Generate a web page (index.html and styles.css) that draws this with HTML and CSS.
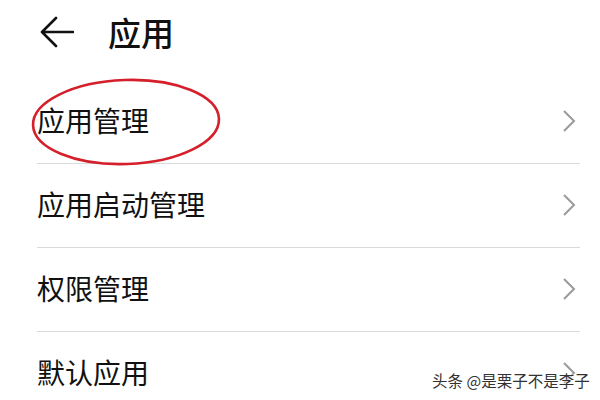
FILE: index.html
```html
<!DOCTYPE html>
<html lang="zh-CN">
<head>
    <meta charset="UTF-8">
    <title>应用</title>
    <link rel="stylesheet" href="styles.css">
</head>
<body>
    <div class="page">
        <header class="top-bar">
            <svg class="back" width="34" height="32" viewBox="0 0 34 32">
                <path d="M33 16 H3 M16 2 L2 16 L16 30" fill="none" stroke="#111" stroke-width="2.6" stroke-linecap="round" stroke-linejoin="round"/>
            </svg>
            <h1 class="title">应用</h1>
        </header>

        <ul class="menu">
            <li class="item">
                <span class="label">应用管理</span>
                <svg class="chevron" width="14" height="22" viewBox="0 0 14 22"><path d="M2 1 L12 11 L2 21" fill="none" stroke="#9a9a9a" stroke-width="2"/></svg>
                <!-- hand-drawn mark around the first entry -->
                <svg class="circle-mark" width="194" height="92" viewBox="0 0 194 92">
                    <ellipse cx="97" cy="46" rx="93" ry="42" fill="none" stroke="#d51f2b" stroke-width="2.6" transform="rotate(-2 97 46)"/>
                </svg>
            </li>
            <li class="item">
                <span class="label">应用启动管理</span>
                <svg class="chevron" width="14" height="22" viewBox="0 0 14 22"><path d="M2 1 L12 11 L2 21" fill="none" stroke="#9a9a9a" stroke-width="2"/></svg>
            </li>
            <li class="item">
                <span class="label">权限管理</span>
                <svg class="chevron" width="14" height="22" viewBox="0 0 14 22"><path d="M2 1 L12 11 L2 21" fill="none" stroke="#9a9a9a" stroke-width="2"/></svg>
            </li>
            <li class="item">
                <span class="label">默认应用</span>
                <svg class="chevron" width="14" height="22" viewBox="0 0 14 22"><path d="M2 1 L12 11 L2 21" fill="none" stroke="#9a9a9a" stroke-width="2"/></svg>
            </li>
        </ul>

        <div class="watermark">头条 @是栗子不是李子</div>
    </div>
</body>
</html>
```

FILE: styles.css
```css
body {
    margin: 0;
    background-color: #FFFFFF;
    font-family: "Noto Sans CJK SC", "Noto Sans", sans-serif;
    color: #111111;
}
.page {
    position: relative;
    width: 600px;
    height: 400px;
    overflow: hidden;
}
.top-bar {
    display: flex;
    align-items: center;
    height: 64px;
    padding-left: 40px;
    gap: 34px;
}
.title {
    margin: 0;
    font-size: 33px;
    font-weight: 500;
    line-height: 1;
}
.menu {
    list-style-type: none;
    margin: 0 20px 0 37px;
    padding: 0;
    padding-top: 16px;
}
.item {
    position: relative;
    display: flex;
    align-items: center;
    justify-content: space-between;
    height: 83px;
    padding-right: 4px;
    border-bottom: 1px solid #d9d9d9;
}
.label {
    margin-top: -3px;
    font-size: 28px;
    line-height: 1;
}
.chevron {
    margin-top: -2px;
}
.circle-mark {
    position: absolute;
    left: -8px;
    top: -4px;
}
.watermark {
    position: absolute;
    left: 432px;
    top: 369px;
    font-size: 15.5px;
    color: #333333;
    text-shadow: 0 0 2px #FFFFFF, 0 0 2px #FFFFFF;
    white-space: nowrap;
}
```
